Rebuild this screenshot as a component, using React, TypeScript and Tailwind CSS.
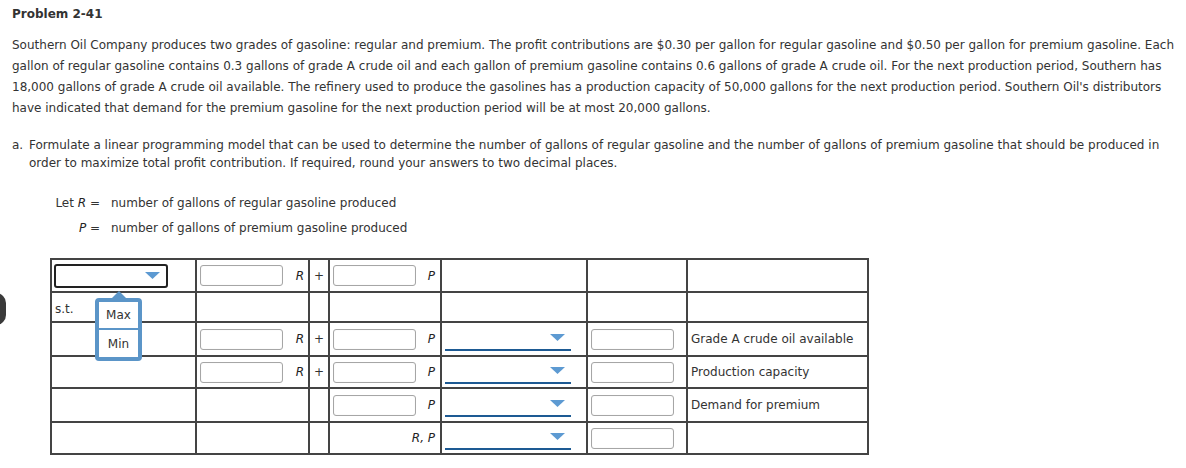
import React from "react";

const font = { fontFamily: 'Verdana, "DejaVu Sans", sans-serif' };

function Box() {
  return (
    <div className="w-[83px] h-[21px] rounded-[3px] border border-[#a6a6a6] bg-white shadow-[inset_0_0_1px_rgba(0,0,0,0.15)]" />
  );
}

function Tri() {
  return (
    <svg width="15" height="7" viewBox="0 0 15 7" className="block">
      <polygon points="0,0 15,0 7.5,7" fill="#5d9ad2" />
    </svg>
  );
}

function Sign() {
  return (
    <div className="w-[126px] h-[22px] border-b-[2px] border-[#1d5a93] flex items-start justify-end pr-[6px] pt-[5px]">
      <Tri />
    </div>
  );
}

function Var({ v }: { v: string }) {
  return <span className="italic text-[#222]">{v}</span>;
}

function Cell({ children, className = "" }: { children?: React.ReactNode; className?: string }) {
  return <div className={"bg-white flex items-center " + className}>{children}</div>;
}

function RCell() {
  return (
    <Cell className="justify-between pl-[3px] pr-[4px]">
      <Box />
      <Var v="R" />
    </Cell>
  );
}
function PCell() {
  return (
    <Cell className="justify-between pl-[3px] pr-[5px]">
      <Box />
      <Var v="P" />
    </Cell>
  );
}
function Plus() {
  return <Cell className="justify-center">+</Cell>;
}
function SignCell() {
  return (
    <Cell className="pl-[3px] pt-[2px]">
      <Sign />
    </Cell>
  );
}
function ValCell() {
  return (
    <Cell className="pl-[3px]">
      <Box />
    </Cell>
  );
}
function TextCell({ t }: { t?: string }) {
  return <Cell className="pl-[3px]">{t}</Cell>;
}

export default function App() {
  return (
    <div className="relative w-[1186px] h-[468px] bg-white overflow-hidden text-[12px] text-[#333]" style={font}>
      <div className="absolute left-[-14px] top-[293px] w-[20px] h-[32px] rounded-full bg-[#3a3a3a]" />
      <div className="pl-[12px] pt-[5px]">
        <div className="font-bold leading-[18px] text-[#333]">Problem 2-41</div>
        <div className="mt-[12px] leading-[21px] whitespace-nowrap">
          <div>Southern Oil Company produces two grades of gasoline: regular and premium. The profit contributions are $0.30 per gallon for regular gasoline and $0.50 per gallon for premium gasoline. Each</div>
          <div>gallon of regular gasoline contains 0.3 gallons of grade A crude oil and each gallon of premium gasoline contains 0.6 gallons of grade A crude oil. For the next production period, Southern has</div>
          <div>18,000 gallons of grade A crude oil available. The refinery used to produce the gasolines has a production capacity of 50,000 gallons for the next production period. Southern Oil's distributors</div>
          <div>have indicated that demand for the premium gasoline for the next production period will be at most 20,000 gallons.</div>
        </div>
        <div className="mt-[17px] flex leading-[18px]">
          <div className="w-[17px]">a.</div>
          <div className="whitespace-nowrap">
            <div>Formulate a linear programming model that can be used to determine the number of gallons of regular gasoline and the number of gallons of premium gasoline that should be produced in</div>
            <div>order to maximize total profit contribution. If required, round your answers to two decimal places.</div>
          </div>
        </div>
        <div className="mt-[19px] ml-[33px] grid grid-cols-[55px_auto] gap-x-[11px] leading-[25px] w-max whitespace-nowrap">
          <div className="text-right">Let <Var v="R" /> =</div>
          <div>number of gallons of regular gasoline produced</div>
          <div className="text-right"><Var v="P" /> =</div>
          <div>number of gallons of premium gasoline produced</div>
        </div>
        <div className="relative mt-[17px] ml-[38px] w-max">
          <div className="grid bg-[#444] gap-[2px] p-[2px] grid-cols-[143px_111px_18px_110px_144px_98px_179px] grid-rows-[31px_28px_32px_30px_32px_30px]">
            <Cell className="pl-[2px]">
              <div className="w-[114px] h-[24px] rounded-[3px] border-[2px] border-[#222] flex items-center justify-end pr-[6px]">
                <Tri />
              </div>
            </Cell>
            <RCell />
            <Plus />
            <PCell />
            <Cell />
            <Cell />
            <Cell />

            <Cell className="pl-[3px] items-start pt-[7px]">s.t.</Cell>
            <Cell />
            <Cell />
            <Cell />
            <Cell />
            <Cell />
            <Cell />

            <Cell />
            <RCell />
            <Plus />
            <PCell />
            <SignCell />
            <ValCell />
            <TextCell t="Grade A crude oil available" />

            <Cell />
            <RCell />
            <Plus />
            <PCell />
            <SignCell />
            <ValCell />
            <TextCell t="Production capacity" />

            <Cell />
            <Cell />
            <Cell />
            <PCell />
            <SignCell />
            <ValCell />
            <TextCell t="Demand for premium" />

            <Cell />
            <Cell />
            <Cell />
            <Cell className="justify-end pr-[5px]">
              <Var v="R, P" />
            </Cell>
            <SignCell />
            <ValCell />
            <TextCell />
          </div>
          <div className="absolute left-[45px] top-[33px] w-[47px]">
            <svg width="14" height="7" viewBox="0 0 14 7" className="block mx-auto">
              <polygon points="0,7 7,0 14,7" fill="#5b95c8" />
            </svg>
            <div className="border-[4px] border-[#5b95c8] rounded-[4px] bg-white">
              <div className="h-[28px] flex items-center justify-center border-b-[2px] border-[#5b95c8]">Max</div>
              <div className="h-[27px] flex items-center justify-center">Min</div>
            </div>
          </div>
        </div>
      </div>
    </div>
  );
}
